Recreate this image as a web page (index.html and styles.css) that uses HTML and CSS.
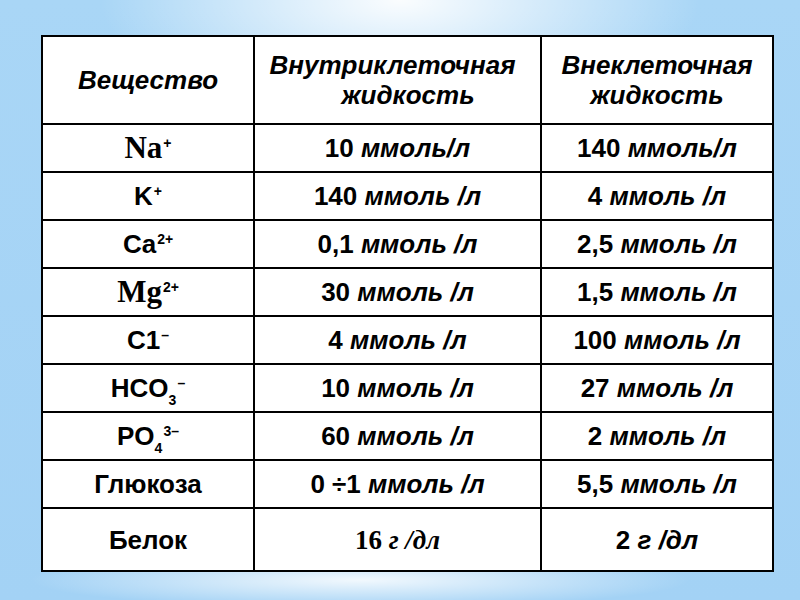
FILE: index.html
```html
<!DOCTYPE html>
<html lang="ru">
<head>
<meta charset="utf-8">
<link rel="stylesheet" href="styles.css">
</head>
<body>
<div class="slide">
  <table class="ions">
    <colgroup>
      <col class="c1"><col class="c2"><col class="c3">
    </colgroup>
    <tr class="head">
      <th>Вещество</th>
      <th class="h2"><span class="l1">Внутриклеточная</span><br><span class="l2">жидкость</span></th>
      <th>Внеклеточная<br>жидкость</th>
    </tr>
    <tr>
      <td class="serif big">Na<sup>+</sup></td>
      <td>10 <i>ммоль/л</i></td>
      <td>140 <i>ммоль/л</i></td>
    </tr>
    <tr>
      <td>K<sup>+</sup></td>
      <td>140 <i>ммоль /л</i></td>
      <td>4 <i>ммоль /л</i></td>
    </tr>
    <tr>
      <td>Ca<sup>2+</sup></td>
      <td>0,1 <i>ммоль /л</i></td>
      <td>2,5 <i>ммоль /л</i></td>
    </tr>
    <tr>
      <td class="serif big">Mg<sup>2+</sup></td>
      <td>30 <i>ммоль /л</i></td>
      <td>1,5 <i>ммоль /л</i></td>
    </tr>
    <tr>
      <td>C1<sup>–</sup></td>
      <td>4 <i>ммоль /л</i></td>
      <td>100 <i>ммоль /л</i></td>
    </tr>
    <tr>
      <td>HCO<sub>3</sub><sup class="after">–</sup></td>
      <td>10 <i>ммоль /л</i></td>
      <td>27 <i>ммоль /л</i></td>
    </tr>
    <tr>
      <td>PO<sub>4</sub><sup class="after">3–</sup></td>
      <td>60 <i>ммоль /л</i></td>
      <td>2 <i>ммоль /л</i></td>
    </tr>
    <tr>
      <td>Глюкоза</td>
      <td>0 ÷1 <i>ммоль /л</i></td>
      <td>5,5 <i>ммоль /л</i></td>
    </tr>
    <tr class="last">
      <td>Белок</td>
      <td class="serif">16 <i>г /дл</i></td>
      <td>2 <i>г /дл</i></td>
    </tr>
  </table>
</div>
</body>
</html>
```

FILE: styles.css
```css
html, body {
  margin: 0;
  padding: 0;
}
body {
  width: 800px;
  height: 600px;
  overflow: hidden;
  background:
    radial-gradient(ellipse 300px 120px at 400px 0px, rgba(255,255,255,0.95), rgba(255,255,255,0) 100%),
    radial-gradient(ellipse 330px 28px at 360px 580px, rgba(255,255,255,0.85), rgba(255,255,255,0) 100%),
    linear-gradient(to bottom, #a9d6f6 0%, #a3d2f5 100%);
  font-family: "Liberation Sans", Arial, sans-serif;
}
.slide {
  padding: 35px 0 0 41px;
}
.ions {
  border-collapse: collapse;
  background: #fff;
  width: 731px;
  table-layout: fixed;
  color: #000;
}
.c1 { width: 212px; }
.c2 { width: 287px; }
.c3 { width: 232px; }
.ions th, .ions td {
  border: 2px solid #000;
  text-align: center;
  vertical-align: middle;
  font-weight: bold;
  font-size: 26px;
  line-height: 30px;
  padding: 0;
  height: 48px;
  box-sizing: border-box;
}
.ions th {
  font-style: italic;
  height: 88px;
}
.ions th.h2 {
  padding-right: 10px;
}
.head .l2 {
  padding-left: 31px;
}
.ions .last td {
  height: 63px;
}
.ions i {
  font-style: italic;
}
.ions td.serif {
  font-family: "Liberation Serif", "Times New Roman", serif;
  font-size: 27px;
}
.ions td.big {
  font-size: 31px;
}
.serif sup {
  font-family: "Liberation Sans", Arial, sans-serif;
}
sup {
  font-size: 14px;
  vertical-align: 9px;
  line-height: 0;
  margin-left: 1px;
}
.big sup {
  vertical-align: 10px;
}
sub {
  font-size: 14px;
  vertical-align: -8px;
  line-height: 0;
}
sup.after {
  margin-left: 1px;
}
```
